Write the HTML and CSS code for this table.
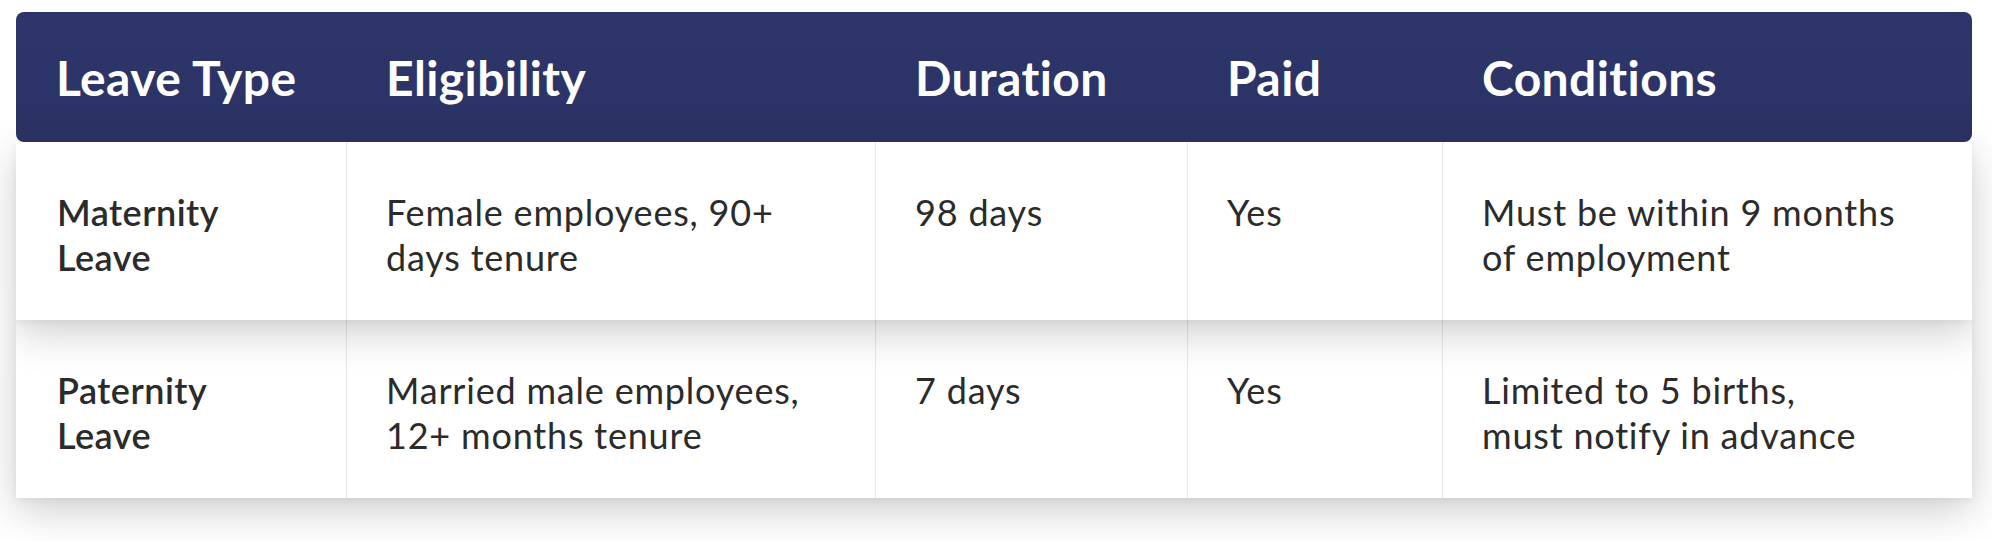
FILE: index.html
```html
<!DOCTYPE html>
<html lang="en">
<head>
<meta charset="utf-8">
<title>Leave Policy</title>
<link rel="stylesheet" href="styles.css">
</head>
<body>
  <div class="leave-table">
    <div class="row head">
      <div class="cell">Leave Type</div>
      <div class="cell">Eligibility</div>
      <div class="cell">Duration</div>
      <div class="cell">Paid</div>
      <div class="cell">Conditions</div>
    </div>
    <div class="row body first">
      <div class="cell type">Maternity<br>Leave</div>
      <div class="cell">Female employees, 90+<br>days tenure</div>
      <div class="cell">98 days</div>
      <div class="cell">Yes</div>
      <div class="cell">Must be within 9 months<br>of employment</div>
    </div>
    <div class="row body second">
      <div class="cell type">Paternity<br>Leave</div>
      <div class="cell">Married male employees,<br>12+ months tenure</div>
      <div class="cell">7 days</div>
      <div class="cell">Yes</div>
      <div class="cell">Limited to 5 births,<br>must notify in advance</div>
    </div>
  </div>
</body>
</html>
```
FILE: styles.css
```css
html, body {
  margin: 0;
  padding: 0;
  background: #ffffff;
}

body {
  font-family: "Lato", "Nunito Sans", "Noto Sans", sans-serif;
  color: #2b2b2b;
  min-height: 541px;
}

.leave-table {
  margin: 12px 20px 44px 16px;
  display: flex;
  flex-direction: column;
}

.row {
  display: grid;
  grid-template-columns: 330px 529px 312px 255px 1fr;
  position: relative;
}

.head {
  background: linear-gradient(180deg, #2e356a 0%, #2c3366 70%, #2a3062 100%);
  border-radius: 8px;
  color: #ffffff;
  z-index: 3;
}

.head .cell {
  font-size: 48px;
  font-weight: 700;
  line-height: 58px;
  padding: 37px 40px 35px 40px;
  letter-spacing: 0.4px;
}

.body {
  background: #ffffff;
  box-shadow: 0 12px 40px rgba(0, 0, 0, 0.2), 0 2px 8px rgba(0, 0, 0, 0.05);
}

.body.first {
  z-index: 2;
}

.body.second {
  z-index: 1;
}

.body .cell {
  font-size: 36px;
  font-weight: 400;
  line-height: 45px;
  padding: 48px 30px 40px 39px;
  border-left: 1px solid #e6e6e6;
  letter-spacing: 0.8px;
}

.body .cell:first-child {
  border-left: none;
  padding-left: 41px;
}

.body .cell.type {
  font-weight: 600;
  letter-spacing: 0.5px;
}
```
